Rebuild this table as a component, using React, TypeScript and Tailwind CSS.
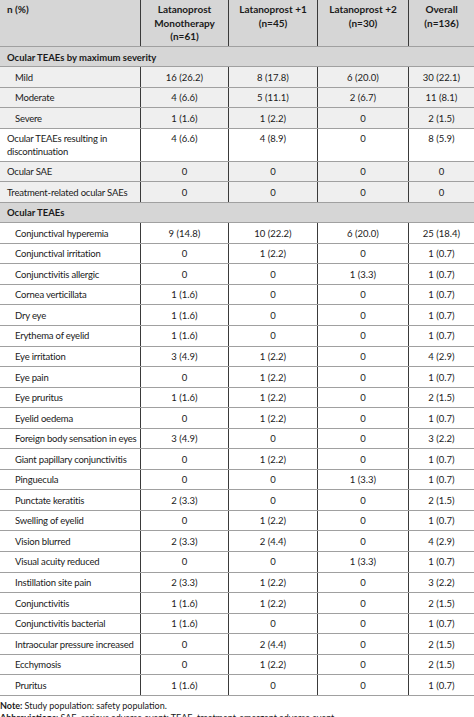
import React from "react";

type Row = {
    label: React.ReactNode;
    values: string[];
    indent?: boolean;
    shaded?: boolean;
    tall?: boolean;
};

const cols = "grid grid-cols-[140px_88px_89px_91px_66px]";

const severityRows: Row[] = [
    { label: "Mild", values: ["16 (26.2)", "8 (17.8)", "6 (20.0)", "30 (22.1)"], indent: true, shaded: true },
    { label: "Moderate", values: ["4 (6.6)", "5 (11.1)", "2 (6.7)", "11 (8.1)"], indent: true, shaded: true },
    { label: "Severe", values: ["1 (1.6)", "1 (2.2)", "0", "2 (1.5)"], indent: true, shaded: true },
    {
        label: (
            <>
                Ocular TEAEs resulting in
                <br />
                discontinuation
            </>
        ),
        values: ["4 (6.6)", "4 (8.9)", "0", "8 (5.9)"],
        tall: true,
    },
    { label: "Ocular SAE", values: ["0", "0", "0", "0"], shaded: true },
    { label: "Treatment-related ocular SAEs", values: ["0", "0", "0", "0"], shaded: true },
];

const teaeRows: Row[] = [
    { label: "Conjunctival hyperemia", values: ["9 (14.8)", "10 (22.2)", "6 (20.0)", "25 (18.4)"] },
    { label: "Conjunctival irritation", values: ["0", "1 (2.2)", "0", "1 (0.7)"] },
    { label: "Conjunctivitis allergic", values: ["0", "0", "1 (3.3)", "1 (0.7)"] },
    { label: "Cornea verticillata", values: ["1 (1.6)", "0", "0", "1 (0.7)"] },
    { label: "Dry eye", values: ["1 (1.6)", "0", "0", "1 (0.7)"] },
    { label: "Erythema of eyelid", values: ["1 (1.6)", "0", "0", "1 (0.7)"] },
    { label: "Eye irritation", values: ["3 (4.9)", "1 (2.2)", "0", "4 (2.9)"] },
    { label: "Eye pain", values: ["0", "1 (2.2)", "0", "1 (0.7)"] },
    { label: "Eye pruritus", values: ["1 (1.6)", "1 (2.2)", "0", "2 (1.5)"] },
    { label: "Eyelid oedema", values: ["0", "1 (2.2)", "0", "1 (0.7)"] },
    { label: "Foreign body sensation in eyes", values: ["3 (4.9)", "0", "0", "3 (2.2)"] },
    { label: "Giant papillary conjunctivitis", values: ["0", "1 (2.2)", "0", "1 (0.7)"] },
    { label: "Pinguecula", values: ["0", "0", "1 (3.3)", "1 (0.7)"] },
    { label: "Punctate keratitis", values: ["2 (3.3)", "0", "0", "2 (1.5)"] },
    { label: "Swelling of eyelid", values: ["0", "1 (2.2)", "0", "1 (0.7)"] },
    { label: "Vision blurred", values: ["2 (3.3)", "2 (4.4)", "0", "4 (2.9)"] },
    { label: "Visual acuity reduced", values: ["0", "0", "1 (3.3)", "1 (0.7)"] },
    { label: "Instillation site pain", values: ["2 (3.3)", "1 (2.2)", "0", "3 (2.2)"] },
    { label: "Conjunctivitis", values: ["1 (1.6)", "1 (2.2)", "0", "2 (1.5)"] },
    { label: "Conjunctivitis bacterial", values: ["1 (1.6)", "0", "0", "1 (0.7)"] },
    { label: "Intraocular pressure increased", values: ["0", "2 (4.4)", "0", "2 (1.5)"] },
    { label: "Ecchymosis", values: ["0", "1 (2.2)", "0", "2 (1.5)"] },
    { label: "Pruritus", values: ["1 (1.6)", "0", "0", "1 (0.7)"] },
];

function DataRow({ row }: { row: Row }) {
    return (
        <div
            className={`${cols} border-b-[1.5px] border-[#a0a0a0] ${row.tall ? "h-[33px]" : "h-[20.55px]"} ${
                row.shaded ? "bg-[#efefef]" : "bg-white"
            }`}
        >
            <div
                className={`pt-[3.5px] leading-[13px] whitespace-nowrap tracking-[-0.2px] ${
                    row.indent ? "pl-[15px]" : "pl-[7px]"
                }`}
            >
                {row.label}
            </div>
            {row.values.map((v, i) => (
                <div key={i} className="pt-[3.5px] text-center leading-[13px] border-l border-[#3a3a3a]">
                    {v}
                </div>
            ))}
        </div>
    );
}

function SectionRow({ label, tall }: { label: string; tall?: boolean }) {
    return (
        <div
            className={`flex items-start bg-[#d6d6d6] border-b-[1.5px] border-[#a0a0a0] pl-[7px] pt-[3.5px] font-bold leading-[13px] ${
                tall ? "h-[20.5px]" : "h-[20px]"
            }`}
        >
            {label}
        </div>
    );
}

export default function App() {
    return (
        <div className="w-[474px] h-[717px] overflow-hidden bg-white text-[#1a1a1a] text-[9.5px] font-['Lato',sans-serif]">
            {/* Header */}
            <div
                className={`${cols} h-[47px] bg-[#d6d6d6] border-b-[1.5px] border-[#a0a0a0] font-bold text-[10px] leading-[13.5px]`}
            >
                <div className="pl-[7px] pt-[3px]">n (%)</div>
                <div className="pt-[3px] text-center border-l border-[#3a3a3a]">
                    Latanoprost
                    <br />
                    Monotherapy
                    <br />
                    (n=61)
                </div>
                <div className="pt-[3px] text-center border-l border-[#3a3a3a]">
                    Latanoprost +1
                    <br />
                    (n=45)
                </div>
                <div className="pt-[3px] text-center border-l border-[#3a3a3a]">
                    Latanoprost +2
                    <br />
                    (n=30)
                </div>
                <div className="pt-[3px] text-center border-l border-[#3a3a3a]">
                    Overall
                    <br />
                    (n=136)
                </div>
            </div>

            <SectionRow label="Ocular TEAEs by maximum severity" />
            {severityRows.map((r, i) => (
                <DataRow key={i} row={r} />
            ))}

            <SectionRow label="Ocular TEAEs" tall />
            {teaeRows.map((r, i) => (
                <DataRow key={i} row={{ ...r, indent: true }} />
            ))}

            {/* Footnotes */}
            <div className="pt-[4px] text-[9px] leading-[12px]">
                <p>
                    <span className="font-bold">Note:</span> Study population: safety population.
                </p>
                <p>
                    <span className="font-bold">Abbreviations</span>: SAE, serious adverse event; TEAE, treatment-emergent adverse event.
                </p>
            </div>
        </div>
    );
}
